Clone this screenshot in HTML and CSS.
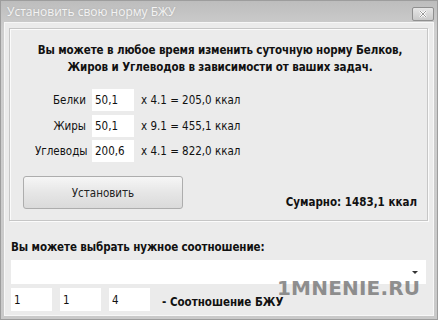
FILE: index.html
```html
<html>
<head>
  <meta charset="utf-8">
  <link rel="stylesheet" href="styles.css">
</head>
<body>

<div class="window">
  <div class="titlebar">
    <span class="title">Установить свою норму БЖУ</span>
    <span class="close-btn">
      <svg width="10" height="8" viewBox="0 0 10 8"><path d="M2 1 L8 7 M8 1 L2 7" stroke="#fff" stroke-width="2.4"/><path d="M2 1 L8 7 M8 1 L2 7" stroke="#9a9a9a" stroke-width="1"/></svg>
    </span>
  </div>

  <div class="client">
    <div class="group">
      <p class="intro">Вы можете в любое время изменить суточную норму Белков,<br>Жиров и Углеводов в зависимости от ваших задач.</p>

      <div class="macro-grid">
        <span class="macro-label">Белки</span>
        <input class="field" type="text" value="50,1">
        <span class="macro-calc">x 4.1 = 205,0 ккал</span>

        <span class="macro-label">Жиры</span>
        <input class="field" type="text" value="50,1">
        <span class="macro-calc">x 9.1 = 455,1 ккал</span>

        <span class="macro-label">Углеводы</span>
        <input class="field" type="text" value="200,6">
        <span class="macro-calc">x 4.1 = 822,0 ккал</span>
      </div>

      <div class="action-row">
        <button class="btn">Установить</button>
        <span class="total">Сумарно: 1483,1 ккал</span>
      </div>
    </div>

    <div class="lower">
      <p class="choose">Вы можете выбрать нужное соотношение:</p>
      <div class="combo">
        <span class="combo-arrow"></span>
      </div>
      <div class="ratio-row">
        <input class="field ratio" type="text" value="1">
        <input class="field ratio" type="text" value="1">
        <input class="field ratio" type="text" value="4">
        <span class="ratio-text">- Соотношение БЖУ</span>
      </div>
      <span class="watermark">1MNENIE.RU</span>
    </div>
  </div>
</div>

</body>
</html>
```

FILE: styles.css
```css
body {
  margin: 0;
  background: #e9e9e9;
}

.window {
  width: 438px;
  height: 320px;
  box-sizing: border-box;
  background: linear-gradient(#bdbdbd, #cfcfcf 30px, #c9c9c9);
  border: 1px solid #9d9d9d;
  display: flex;
  flex-direction: column;
  font-family: "DejaVu Sans Condensed", "DejaVu Sans", sans-serif;
  color: #111;
}

.titlebar {
  height: 21px;
  display: flex;
  align-items: center;
  justify-content: space-between;
  padding: 0 3px 0 6px;
}

.title {
  font-family: "Open Sans", sans-serif;
  font-size: 12px;
  color: #f4f4f4;
  text-shadow: 0 0 2px #a8a8a8;
}

.close-btn {
  width: 20px;
  height: 12px;
  margin-top: 5px;
  border: 1px solid #8f8f8f;
  border-radius: 2px;
  background: linear-gradient(#e6e6e6, #c9c9c9);
  display: flex;
  align-items: center;
  justify-content: center;
}

.client {
  flex: 1;
  margin: 0 3px 3px 3px;
  background: #ebebeb;
  border: 1px solid #f7f7f7;
  position: relative;
}

.group {
  margin: 5px 5px 0 4px;
  border: 1px solid #c6c6c6;
  box-shadow: inset 1px 1px 0 #fbfbfb, 1px 1px 0 #fbfbfb;
  padding: 13px 10px 10px 13px;
  height: 193px;
  box-sizing: border-box;
}

.intro {
  margin: 0;
  text-align: center;
  font-weight: bold;
  font-size: 11.5px;
  letter-spacing: -0.1px;
  line-height: 17px;
}

.macro-grid {
  display: grid;
  grid-template-columns: 51px 42px auto;
  column-gap: 6px;
  row-gap: 3.5px;
  align-items: center;
  margin: 13px 0 0 12px;
}

.macro-label {
  text-align: right;
  font-size: 11.5px;
}

.macro-calc {
  font-size: 11.5px;
  margin-left: 1px;
}

.field {
  height: 22px;
  box-sizing: border-box;
  border: none;
  background: #fff;
  padding: 0 3px;
  font-family: "DejaVu Sans Condensed", "DejaVu Sans", sans-serif;
  font-size: 11.5px;
  color: #111;
  width: 42px;
}

.action-row {
  display: flex;
  justify-content: space-between;
  align-items: flex-end;
  margin-top: 14px;
}

.btn {
  width: 160px;
  height: 33px;
  border: 1px solid #adadad;
  border-radius: 3px;
  background: linear-gradient(#f6f6f6, #e6e6e6 50%, #dadada);
  font-family: "DejaVu Sans Condensed", "DejaVu Sans", sans-serif;
  font-size: 11.5px;
  color: #222;
  padding-top: 1px;
}

.total {
  font-weight: bold;
  font-size: 11.5px;
  margin-bottom: 0;
}

.lower {
  padding: 18px 7px 0 6px;
}

.choose {
  margin: 0;
  font-weight: bold;
  font-size: 11.5px;
  letter-spacing: -0.1px;
  line-height: 16px;
}

.combo {
  height: 24px;
  margin-top: 5px;
  background: #fff;
  position: relative;
}

.combo-arrow {
  position: absolute;
  right: 8px;
  top: 11px;
  border-left: 3px solid transparent;
  border-right: 3px solid transparent;
  border-top: 3px solid #333;
}

.ratio-row {
  display: flex;
  align-items: center;
  gap: 8px;
  margin-top: 4px;
}

.ratio {
  height: 23px;
  width: 41px;
}

.ratio-text {
  margin: 4px 0 0 4px;
  font-weight: bold;
  font-size: 11.5px;
}

.watermark {
  position: absolute;
  left: 272px;
  top: 253px;
  font-family: "DejaVu Sans", sans-serif;
  font-weight: bold;
  font-size: 20px;
  letter-spacing: 0.2px;
  color: #7d7d7d;
  opacity: 0.85;
}
```
